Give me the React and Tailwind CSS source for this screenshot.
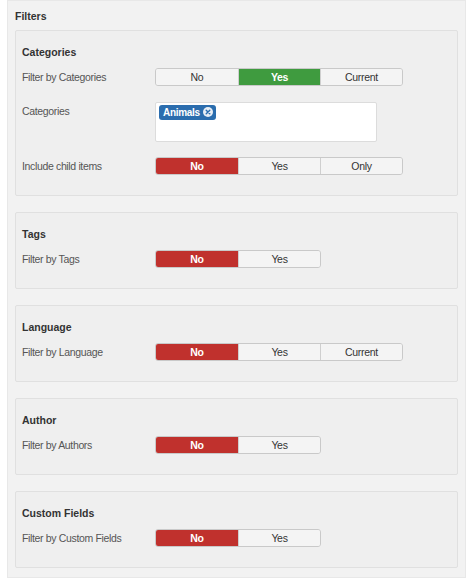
import React from "react";

const font = { fontFamily: '"Liberation Sans", Arial, sans-serif' };

function Toggle({ options, active, color }) {
  return (
    <div className="flex h-[18px] rounded-[3px] border border-[#c9c9c9] overflow-hidden">
      {options.map((o, i) => {
        const isActive = i === active;
        const bg = isActive
          ? color === "green"
            ? "bg-[#3f9b3f] text-white font-bold"
            : "bg-[#c0312d] text-white font-bold"
          : "bg-[#f4f4f4] text-[#333]";
        const border = i > 0 ? "border-l border-[#cfcfcf]" : "";
        return (
          <div
            key={o}
            className={`w-[82px] flex items-center justify-center text-[10.5px] tracking-[-0.3px] leading-none ${bg} ${border}`}
          >
            {o}
          </div>
        );
      })}
    </div>
  );
}

function Row({ label, children }) {
  return (
    <div className="flex items-start">
      <div className="w-[133px] shrink-0 h-[18px] leading-[18px] text-[10.5px] tracking-[-0.35px] text-[#555]">{label}</div>
      {children}
    </div>
  );
}

function Card({ title, children }) {
  return (
    <div className="border border-[#e0e0e0] rounded-[2px] bg-[#efefef] pl-[6px] pt-[14px] pb-[20px]">
      <div className="h-[14px] leading-[14px] text-[10.5px] font-bold text-[#333]">{title}</div>
      <div className="mt-[9px] flex flex-col gap-[15.5px]">{children}</div>
    </div>
  );
}

export default function App() {
  return (
    <div className="w-[474px] h-[579px] bg-white" style={font}>
      <div className="ml-[7px] w-[459px] h-[578px] bg-[#f2f2f2] border border-[#e8e8e8] px-[7px] pt-[7px]">
        <div className="h-[16px] leading-[16px] text-[10.5px] font-bold text-[#333]">Filters</div>
        <div className="mt-[6px] flex flex-col gap-[16px]">
          <Card title="Categories">
            <Row label="Filter by Categories">
              <Toggle options={["No", "Yes", "Current"]} active={1} color="green" />
            </Row>
            <Row label="Categories">
              <div className="w-[222px] h-[40px] bg-white border border-[#dcdcdc] rounded-[2px] pt-[2px] pl-[3px]">
                <div className="flex w-fit items-center h-[15px] rounded-[3px] bg-[#2b6dae] text-white text-[10px] tracking-[-0.3px] font-bold pl-[4px] pr-[3px] gap-[3px]">
                  <span>Animals</span>
                  <svg width="10" height="10" viewBox="0 0 10 10">
                    <circle cx="5" cy="5" r="5" fill="#e8eef5" />
                    <path d="M3.2 3.2 L6.8 6.8 M6.8 3.2 L3.2 6.8" stroke="#2b6dae" strokeWidth="1.4" strokeLinecap="round" />
                  </svg>
                </div>
              </div>
            </Row>
            <Row label="Include child items">
              <Toggle options={["No", "Yes", "Only"]} active={0} color="red" />
            </Row>
          </Card>
          <Card title="Tags">
            <Row label="Filter by Tags">
              <Toggle options={["No", "Yes"]} active={0} color="red" />
            </Row>
          </Card>
          <Card title="Language">
            <Row label="Filter by Language">
              <Toggle options={["No", "Yes", "Current"]} active={0} color="red" />
            </Row>
          </Card>
          <Card title="Author">
            <Row label="Filter by Authors">
              <Toggle options={["No", "Yes"]} active={0} color="red" />
            </Row>
          </Card>
          <Card title="Custom Fields">
            <Row label="Filter by Custom Fields">
              <Toggle options={["No", "Yes"]} active={0} color="red" />
            </Row>
          </Card>
        </div>
      </div>
    </div>
  );
}
